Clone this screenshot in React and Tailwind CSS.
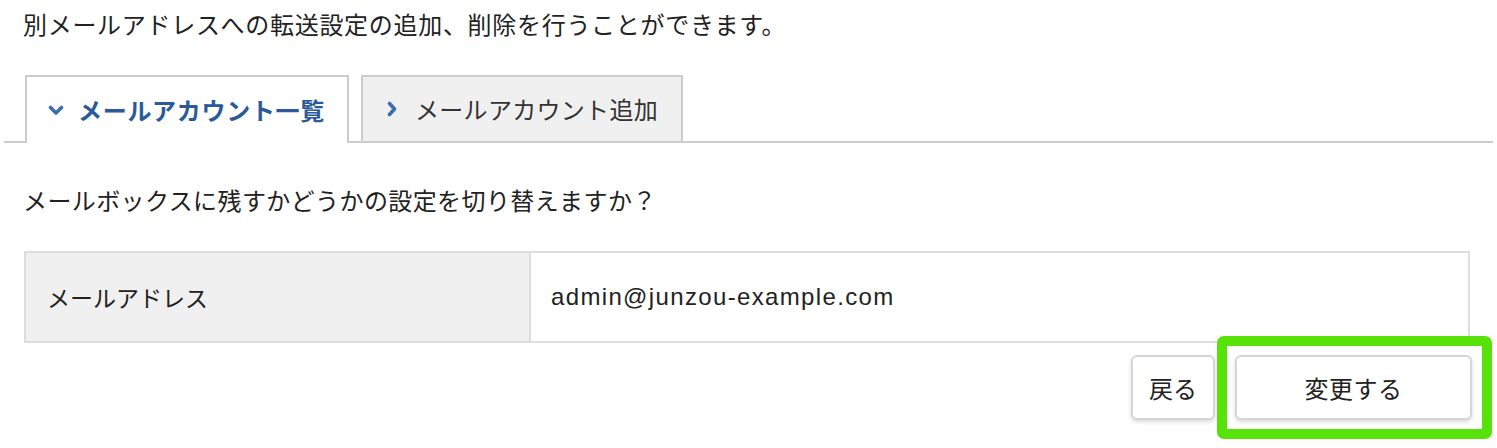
import React from "react";

const jp = { fontFamily: '"Noto Sans CJK JP", "Noto Sans", sans-serif' };

function ChevronDown() {
  return (
    <svg width="16" height="11" viewBox="0 0 16 11" className="shrink-0">
      <polyline points="2.5,2.5 8,8 13.5,2.5" fill="none" stroke="#3d6fae" strokeWidth="3.6" strokeLinecap="round" strokeLinejoin="round" />
    </svg>
  );
}

function ChevronRight() {
  return (
    <svg width="10" height="16" viewBox="0 0 10 16" className="shrink-0">
      <polyline points="2.5,2.5 7.5,8 2.5,13.5" fill="none" stroke="#3d6fae" strokeWidth="3.6" strokeLinecap="round" strokeLinejoin="round" />
    </svg>
  );
}

export default function App() {
  return (
    <div className="relative h-[448px] w-[1497px] overflow-hidden bg-white text-[#222]" style={jp}>
      <p className="pl-[23px] pt-[6px] text-[24px] leading-[36px] tracking-[0.7px]">
        別メールアドレスへの転送設定の追加、削除を行うことができます。
      </p>

      <div className="mx-[4px] mt-[33px] flex gap-[12px] border-b-2 border-[#cccccc] pl-[21px]">
        <div className="-mb-[2px] flex h-[68px] w-[324px] items-center border-2 border-b-0 border-[#cccccc] bg-white pl-[21px]">
          <ChevronDown />
          <span className="ml-[14px] text-[24px] font-bold tracking-[0.7px] text-[#2b5a9b]">メールアカウント一覧</span>
        </div>
        <div className="flex h-[66px] w-[322px] items-center border-2 border-b-0 border-[#cccccc] bg-[#f0f0f0] pl-[24px]">
          <ChevronRight />
          <span className="ml-[18px] text-[24px] tracking-[0.3px] text-[#333]">メールアカウント追加</span>
        </div>
      </div>

      <p className="mt-[39px] pl-[23px] text-[24px] leading-[36px] tracking-[0.4px]">
        メールボックスに残すかどうかの設定を切り替えますか？
      </p>

      <div className="ml-[24px] mt-[33px] grid h-[92px] w-[1446px] grid-cols-[505px_1fr] border-2 border-[#dddddd]">
        <div className="flex items-center border-r-2 border-[#dddddd] bg-[#f0f0f0] pl-[21px] text-[23px]">
          メールアドレス
        </div>
        <div
          className="flex items-center pl-[20px] text-[24px] tracking-[1.35px] text-[#222]"
          style={{ fontFamily: '"Liberation Sans", Arial, sans-serif' }}
        >
          admin@junzou-example.com
        </div>
      </div>

      <div className="mt-[12px] flex justify-end gap-[20px] pr-[25px]">
        <button className="flex h-[65px] w-[84px] items-center justify-center rounded-[6px] border-2 border-[#d6d6d6] bg-white text-[24px] text-[#222] shadow-[0_2px_4px_rgba(0,0,0,0.15)]">
          戻る
        </button>
        <button className="flex h-[65px] w-[237px] items-center justify-center rounded-[6px] border-2 border-[#d6d6d6] bg-white text-[24px] tracking-[0.5px] text-[#222] shadow-[0_2px_4px_rgba(0,0,0,0.15)]">
          変更する
        </button>
      </div>

      <div className="pointer-events-none absolute left-[1217px] top-[336px] h-[103px] w-[275px] rounded-[7px] border-[10px] border-[#57e20a]" />
    </div>
  );
}
